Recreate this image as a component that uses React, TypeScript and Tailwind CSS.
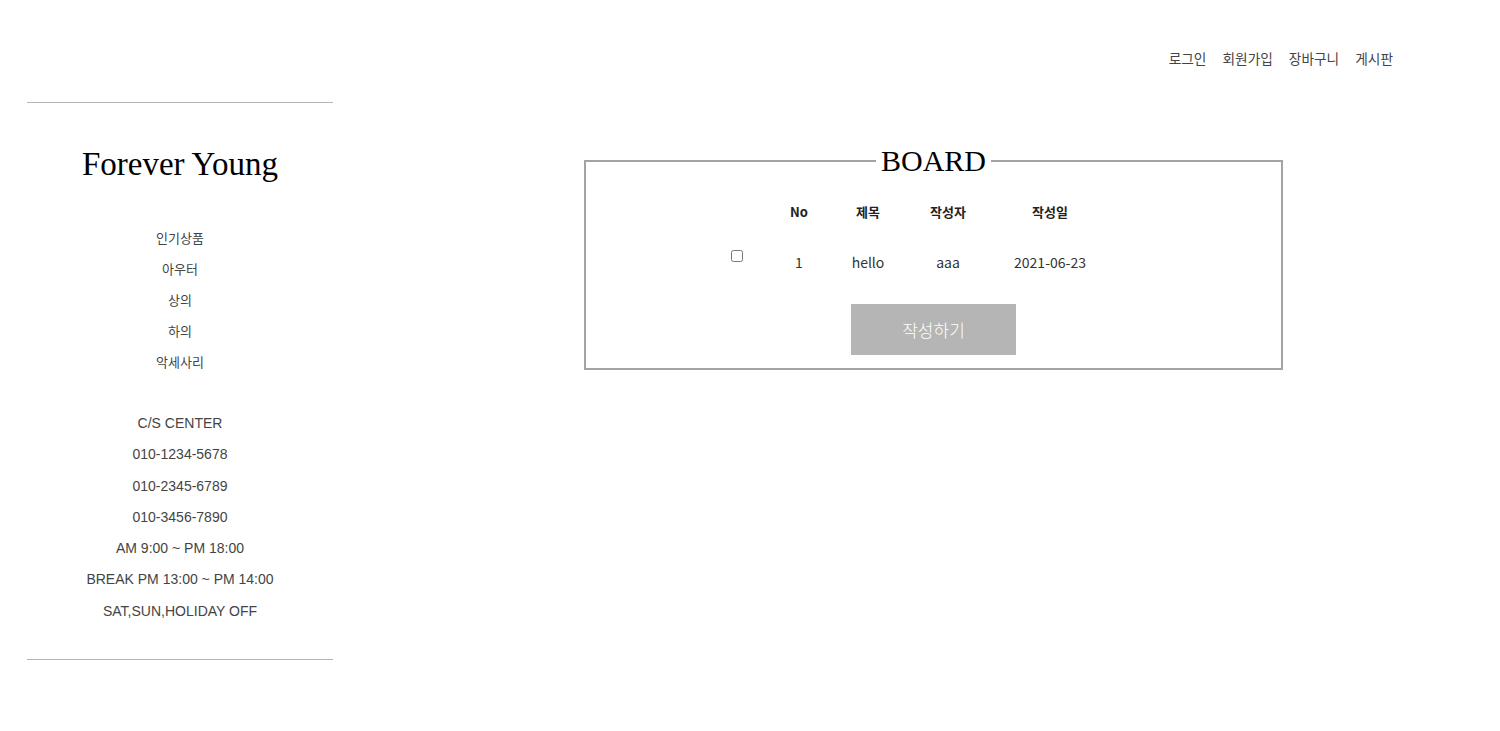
import React from "react";

const menu = ["인기상품", "아우터", "상의", "하의", "악세사리"];
const cs = [
  "C/S CENTER",
  "010-1234-5678",
  "010-2345-6789",
  "010-3456-7890",
  "AM 9:00 ~ PM 18:00",
  "BREAK PM 13:00 ~ PM 14:00",
  "SAT,SUN,HOLIDAY OFF",
];

const posts = [{ no: 1, title: "hello", writer: "aaa", date: "2021-06-23" }];

export default function App() {
  return (
    <div className="min-h-[731px] bg-white text-[#333] font-['Noto_Sans_CJK_KR','Noto_Sans',sans-serif]">
      <header className="h-[102px] flex justify-end items-start pt-[47px] pr-[107px]">
        <nav className="flex gap-[16px] text-[13.7px] leading-[22px] text-[#444]">
          <a href="#">로그인</a>
          <a href="#">회원가입</a>
          <a href="#">장바구니</a>
          <a href="#">게시판</a>
        </nav>
      </header>

      <div className="flex items-start">
        <aside className="ml-[27px] w-[306px] border-t border-b border-[#b5b5b5] pt-[41px] pb-[32px] text-center">
          <h1 className="font-['Liberation_Serif',serif] text-[33px] leading-[40px] text-black">
            Forever Young
          </h1>
          <ul className="mt-[38px] text-[13px] leading-[31px] text-[#444]">
            {menu.map((m) => (
              <li key={m}>{m}</li>
            ))}
          </ul>
          <ul className="mt-[31px] font-['Liberation_Sans','Noto_Sans',sans-serif] text-[14px] leading-[31.3px] text-[#444]">
            {cs.map((c) => (
              <li key={c}>{c}</li>
            ))}
          </ul>
        </aside>

        <main className="ml-[251px] pt-[43px]">
          <fieldset className="w-[699px] border-2 border-[#a3a3a3] pb-[13px]">
            <legend className="mx-auto px-[5px] font-['Liberation_Serif',serif] text-[30px] leading-[32px] text-black">
              BOARD
            </legend>
            <table className="ml-[131px] mt-[20px] text-center">
              <thead>
                <tr className="h-[30px] text-[13px] font-semibold text-[#222]">
                  <th className="w-[40px]"></th>
                  <th className="w-[84px]">No</th>
                  <th className="w-[54px]">제목</th>
                  <th className="w-[106px]">작성자</th>
                  <th className="w-[98px]">작성일</th>
                </tr>
              </thead>
              <tbody>
                {posts.map((p) => (
                  <tr key={p.no} className="h-[50px] text-[14px] text-[#333]">
                    <td className="pt-[20px] align-middle">
                      <input type="checkbox" className="w-[12px] h-[12px] -translate-y-[6px]" />
                    </td>
                    <td className="pt-[20px] align-middle">{p.no}</td>
                    <td className="pt-[20px] align-middle">{p.title}</td>
                    <td className="pt-[20px] align-middle">{p.writer}</td>
                    <td className="pt-[20px] align-middle">{p.date}</td>
                  </tr>
                ))}
              </tbody>
            </table>
            <button className="block mx-auto mt-[27px] w-[165px] h-[51px] bg-[#b5b5b5] text-white text-[17px] font-light">
              작성하기
            </button>
          </fieldset>
        </main>
      </div>
    </div>
  );
}
